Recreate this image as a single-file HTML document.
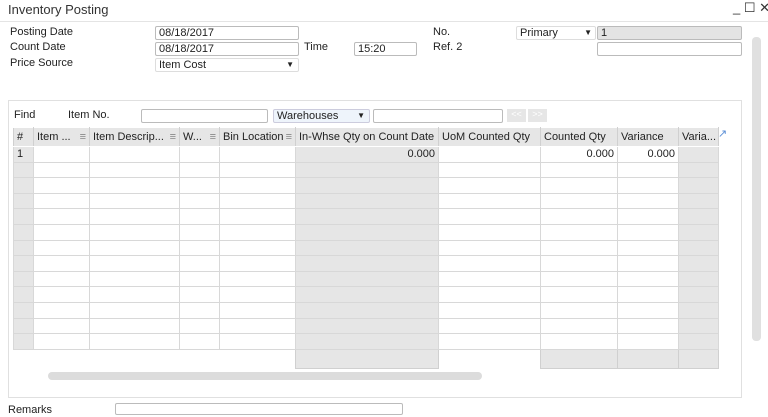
<!DOCTYPE html>
<html><head><style>
*{margin:0;padding:0;box-sizing:border-box}
body{width:768px;height:408px;overflow:hidden;background:#fff;font-family:"Liberation Sans",sans-serif;font-size:11px;color:#222;position:relative}
.a{position:absolute;white-space:nowrap}
.in{position:absolute;height:14px;border:1px solid #bbb;border-radius:2px;background:#fff;padding:0 3px;line-height:12px;font-size:11px}
.lbl{position:absolute;line-height:14px}
table{position:absolute;left:13px;top:127px;width:705px;border-collapse:collapse;table-layout:fixed}
td,th{border:1px solid #d8d8d8;height:15.6px;padding:0 3px;font-weight:normal;font-size:11px;text-align:left;white-space:nowrap;overflow:hidden;position:relative}
th{background:#e6e6e6;height:19px;border-color:#fff #d0d0d0}
td.g{background:#e6e6e6}
td.r{text-align:right}
tr.s td{border:none}
tr.s td.g{background:#e6e6e6;border:1px solid #d0d0d0;height:19px}
.eq{color:#888;position:absolute;right:3px;top:3px}
</style></head><body>
<div class="a" style="left:8px;top:2px;font-size:13px;color:#333">Inventory Posting</div>
<div class="a" style="left:733px;top:0;font-size:13px;color:#333">_ ☐ ✕</div>
<div class="a" style="left:0;top:21px;width:768px;height:1px;background:#e4e4e4"></div>
<div class="lbl" style="left:10px;top:25px">Posting Date</div>
<div class="lbl" style="left:10px;top:40px">Count Date</div>
<div class="lbl" style="left:10px;top:56px">Price Source</div>
<div class="in" style="left:155px;top:26px;width:144px">08/18/2017</div>
<div class="in" style="left:155px;top:42px;width:144px">08/18/2017</div>
<div class="in" style="left:155px;top:58px;width:144px;border-color:#ddd">Item Cost<span style="position:absolute;right:4px;font-size:8px">▼</span></div>
<div class="lbl" style="left:304px;top:40px">Time</div>
<div class="in" style="left:354px;top:42px;width:63px">15:20</div>
<div class="lbl" style="left:433px;top:25px">No.</div>
<div class="lbl" style="left:433px;top:40px">Ref. 2</div>
<div class="in" style="left:516px;top:26px;width:80px;border-color:#ddd">Primary<span style="position:absolute;right:3px;font-size:8px">▼</span></div>
<div class="in" style="left:597px;top:26px;width:145px;background:#e4e4e4">1</div>
<div class="in" style="left:597px;top:42px;width:145px"></div>
<div class="a" style="left:752px;top:37px;width:9px;height:304px;background:#e0e0e0;border-radius:4px"></div>
<div class="a" style="left:8px;top:100px;width:734px;height:298px;border:1px solid #e0e0e0"></div>
<div class="lbl" style="left:14px;top:108px">Find</div>
<div class="lbl" style="left:68px;top:108px">Item No.</div>
<div class="in" style="left:141px;top:109px;width:127px"></div>
<div class="in" style="left:273px;top:109px;width:97px;background:#eef4fb;border-color:#ccd">Warehouses<span style="position:absolute;right:4px;font-size:8px">▼</span></div>
<div class="in" style="left:373px;top:109px;width:130px"></div>
<div class="a" style="left:507px;top:109px;width:19px;height:13px;background:#e6e6e6;color:#fff;font-size:9px;text-align:center">&lt;&lt;</div>
<div class="a" style="left:528px;top:109px;width:19px;height:13px;background:#e6e6e6;color:#fff;font-size:9px;text-align:center">&gt;&gt;</div>
<div class="a" style="left:718px;top:127px;color:#5b8fd6;font-size:11px">↗</div>
<table>
<colgroup><col style="width:20px"><col style="width:56px"><col style="width:90px"><col style="width:40px"><col style="width:76px"><col style="width:143px"><col style="width:102px"><col style="width:77px"><col style="width:61px"><col style="width:40px"></colgroup>
<tr><th>#</th><th>Item ...<span class="eq">≡</span></th><th>Item Descrip...<span class="eq">≡</span></th><th>W...<span class="eq">≡</span></th><th>Bin Location<span class="eq">≡</span></th><th>In-Whse Qty on Count Date</th><th>UoM Counted Qty</th><th>Counted Qty</th><th>Variance</th><th>Varia...</th></tr>
<tr><td class="g">1</td><td></td><td></td><td></td><td></td><td class="g r">0.000</td><td></td><td class="r">0.000</td><td class="r">0.000</td><td class="g"></td></tr>
<tr><td class="g"></td><td></td><td></td><td></td><td></td><td class="g"></td><td></td><td></td><td></td><td class="g"></td></tr>
<tr><td class="g"></td><td></td><td></td><td></td><td></td><td class="g"></td><td></td><td></td><td></td><td class="g"></td></tr>
<tr><td class="g"></td><td></td><td></td><td></td><td></td><td class="g"></td><td></td><td></td><td></td><td class="g"></td></tr>
<tr><td class="g"></td><td></td><td></td><td></td><td></td><td class="g"></td><td></td><td></td><td></td><td class="g"></td></tr>
<tr><td class="g"></td><td></td><td></td><td></td><td></td><td class="g"></td><td></td><td></td><td></td><td class="g"></td></tr>
<tr><td class="g"></td><td></td><td></td><td></td><td></td><td class="g"></td><td></td><td></td><td></td><td class="g"></td></tr>
<tr><td class="g"></td><td></td><td></td><td></td><td></td><td class="g"></td><td></td><td></td><td></td><td class="g"></td></tr>
<tr><td class="g"></td><td></td><td></td><td></td><td></td><td class="g"></td><td></td><td></td><td></td><td class="g"></td></tr>
<tr><td class="g"></td><td></td><td></td><td></td><td></td><td class="g"></td><td></td><td></td><td></td><td class="g"></td></tr>
<tr><td class="g"></td><td></td><td></td><td></td><td></td><td class="g"></td><td></td><td></td><td></td><td class="g"></td></tr>
<tr><td class="g"></td><td></td><td></td><td></td><td></td><td class="g"></td><td></td><td></td><td></td><td class="g"></td></tr>
<tr><td class="g"></td><td></td><td></td><td></td><td></td><td class="g"></td><td></td><td></td><td></td><td class="g"></td></tr>
<tr class="s"><td></td><td></td><td></td><td></td><td></td><td class="g"></td><td></td><td class="g"></td><td class="g"></td><td class="g"></td></tr>
</table>
<div class="a" style="left:48px;top:372px;width:434px;height:8px;background:#dcdcdc;border-radius:4px"></div>
<div class="lbl" style="left:8px;top:403px">Remarks</div>
<div class="in" style="left:115px;top:403px;width:288px;height:12px"></div>
</body></html>
